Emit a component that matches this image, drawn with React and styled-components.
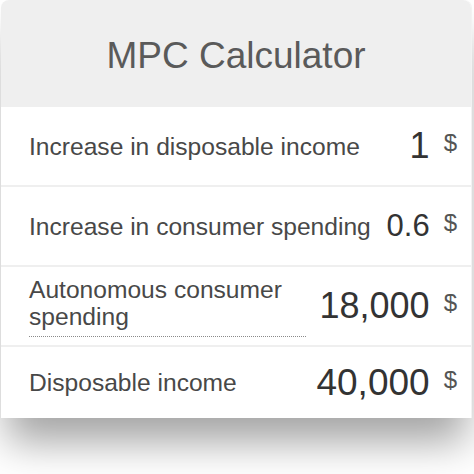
import styled, { createGlobalStyle } from "styled-components";

const GlobalStyle = createGlobalStyle`
    html, body {
        margin: 0;
        padding: 0;
        background-color: #fff;
        font-family: "Liberation Sans", Arial, sans-serif;
    }
`;

const Page = styled.div`
    width: 474px;
    height: 474px;
    box-sizing: border-box;
    padding: 0 2px 0 1px;
    overflow: hidden;
`;
const Card = styled.div`
    width: 100%;
    background-color: #fff;
    border-radius: 8px 8px 0 0;
    border-right: 1px solid #f2f2f2;
    box-sizing: border-box;
    box-shadow: 0 30px 40px -6px rgba(0, 0, 0, 0.36);
`;
const Header = styled.div`
    height: 107px;
    background-color: #efefef;
    border-radius: 8px 8px 0 0;
    display: flex;
    align-items: center;
    justify-content: center;
    padding-top: 4px;
    box-sizing: border-box;
`;
const Title = styled.h1`
    margin: 0;
    color: #5a5a5a;
    font-size: 37px;
    font-weight: 400;
`;
const Row = styled.div`
    height: ${(p) => (p.$last ? "71px" : "80px")};
    box-sizing: border-box;
    border-bottom: ${(p) => (p.$last ? "none" : "2px solid #efefef")};
    display: flex;
    align-items: center;
    padding: 0 14px 0 28px;
`;
const Label = styled.div`
    flex: 1;
    color: #484848;
    font-size: 24.6px;
    line-height: 27px;
`;
const Dotted = styled.span`
    display: inline-block;
    width: 277px;
    padding-bottom: 6px;
    border-bottom: 1px dotted #8a8a8a;
`;
const ValueGroup = styled.div`
    display: flex;
    align-items: center;
    gap: 14px;
`;
const Value = styled.span`
    color: #333;
    font-size: ${(p) => p.$size}px;
    text-align: right;
`;
const Unit = styled.span`
    color: #555;
    font-size: 24px;
    padding-bottom: 6px;
`;

const rows = [
    { label: "Increase in disposable income", value: "1", size: 36 },
    { label: "Increase in consumer spending", value: "0.6", size: 31 },
    { label: "Autonomous consumer spending", value: "18,000", size: 36, dotted: true },
    { label: "Disposable income", value: "40,000", size: 37 },
];

export default () => {
    return (
        <Page>
            <GlobalStyle />
            <Card>
                <Header>
                    <Title>MPC Calculator</Title>
                </Header>
                {rows.map((r, i) => (
                    <Row key={r.label} $last={i === rows.length - 1}>
                        <Label>{r.dotted ? <Dotted>{r.label}</Dotted> : r.label}</Label>
                        <ValueGroup>
                            <Value $size={r.size}>{r.value}</Value>
                            <Unit>$</Unit>
                        </ValueGroup>
                    </Row>
                ))}
            </Card>
        </Page>
    );
};
